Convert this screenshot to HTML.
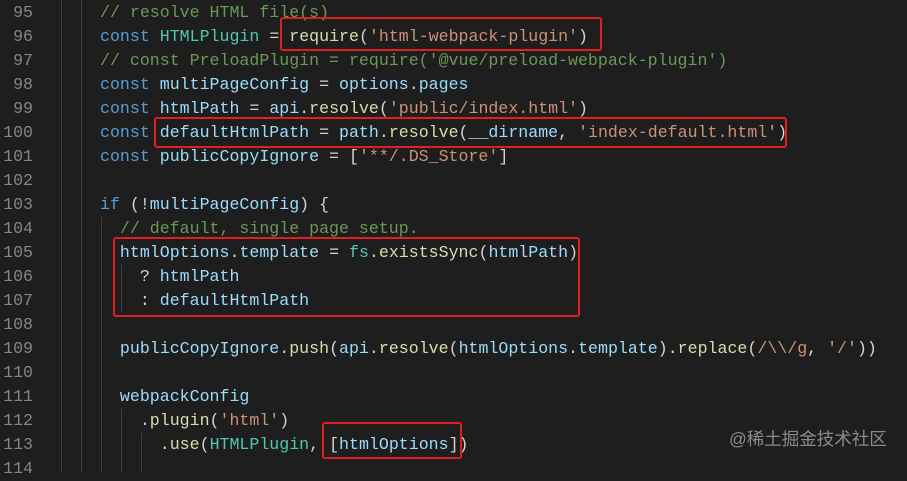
<!DOCTYPE html>
<html><head><meta charset="utf-8"><style>
body{margin:0;width:907px;height:473px;background:#1e1e1e;overflow:hidden;position:relative;font-family:"Liberation Mono",monospace;font-size:16.6px;color:#d4d4d4}
.l{position:absolute;left:0;height:24px;line-height:24px;white-space:pre;width:907px}
.n{position:absolute;right:874px;color:#858585;text-align:right}
.c{position:absolute;left:100px}
.k{color:#569cd6}.v{color:#9cdcfe}.t{color:#4ec9b0}.f{color:#dcdcaa}.s{color:#ce9178}.m{color:#6a9955}
.g{position:absolute;width:1px;background:#404040}
.b{position:absolute;border:2px solid #e02020;border-radius:3px;box-sizing:border-box}
.w{position:absolute;left:729px;top:426px;font-family:"Liberation Sans","Noto Sans CJK SC",sans-serif;font-size:17.5px;color:#8a8a8a}
</style></head><body>
<div class="g" style="left:61px;top:0;height:473px"></div>
<div class="g" style="left:81px;top:0;height:473px"></div>
<div class="g" style="left:101px;top:217px;height:256px"></div>
<div class="g" style="left:121px;top:265px;height:48px"></div>
<div class="g" style="left:121px;top:409px;height:64px"></div>
<div class="g" style="left:141px;top:433px;height:40px"></div>

<div class="l" style="top:1px"><span class="n">95</span><span class="c m">// resolve HTML file(s)</span></div>
<div class="l" style="top:25px"><span class="n">96</span><span class="c"><span class="k">const</span> <span class="t">HTMLPlugin</span> = <span class="f">require</span>(<span class="s">'html-webpack-plugin'</span>)</span></div>
<div class="l" style="top:49px"><span class="n">97</span><span class="c m">// const PreloadPlugin = require('@vue/preload-webpack-plugin')</span></div>
<div class="l" style="top:73px"><span class="n">98</span><span class="c"><span class="k">const</span> <span class="v">multiPageConfig</span> = <span class="v">options</span>.<span class="v">pages</span></span></div>
<div class="l" style="top:97px"><span class="n">99</span><span class="c"><span class="k">const</span> <span class="v">htmlPath</span> = <span class="v">api</span>.<span class="f">resolve</span>(<span class="s">'public/index.html'</span>)</span></div>
<div class="l" style="top:121px"><span class="n">100</span><span class="c"><span class="k">const</span> <span class="v">defaultHtmlPath</span> = <span class="v">path</span>.<span class="f">resolve</span>(<span class="v">__dirname</span>, <span class="s">'index-default.html'</span>)</span></div>
<div class="l" style="top:145px"><span class="n">101</span><span class="c"><span class="k">const</span> <span class="v">publicCopyIgnore</span> = [<span class="s">'**/.DS_Store'</span>]</span></div>
<div class="l" style="top:169px"><span class="n">102</span></div>
<div class="l" style="top:193px"><span class="n">103</span><span class="c"><span class="k">if</span> (!<span class="v">multiPageConfig</span>) {</span></div>
<div class="l" style="top:217px"><span class="n">104</span><span class="c m">  // default, single page setup.</span></div>
<div class="l" style="top:241px"><span class="n">105</span><span class="c">  <span class="v">htmlOptions</span>.<span class="v">template</span> = <span class="t">fs</span>.<span class="f">existsSync</span>(<span class="v">htmlPath</span>)</span></div>
<div class="l" style="top:265px"><span class="n">106</span><span class="c">    ? <span class="v">htmlPath</span></span></div>
<div class="l" style="top:289px"><span class="n">107</span><span class="c">    : <span class="v">defaultHtmlPath</span></span></div>
<div class="l" style="top:313px"><span class="n">108</span></div>
<div class="l" style="top:337px"><span class="n">109</span><span class="c">  <span class="v">publicCopyIgnore</span>.<span class="f">push</span>(<span class="v">api</span>.<span class="f">resolve</span>(<span class="v">htmlOptions</span>.<span class="v">template</span>).<span class="f">replace</span>(<span class="s">/\\/g</span>, <span class="s">'/'</span>))</span></div>
<div class="l" style="top:361px"><span class="n">110</span></div>
<div class="l" style="top:385px"><span class="n">111</span><span class="c">  <span class="v">webpackConfig</span></span></div>
<div class="l" style="top:409px"><span class="n">112</span><span class="c">    .<span class="f">plugin</span>(<span class="s">'html'</span>)</span></div>
<div class="l" style="top:433px"><span class="n">113</span><span class="c">      .<span class="f">use</span>(<span class="t">HTMLPlugin</span>, [<span class="v">htmlOptions</span>])</span></div>
<div class="l" style="top:457px"><span class="n">114</span></div>

<div class="b" style="left:280px;top:17px;width:322px;height:34px"></div>
<div class="b" style="left:154px;top:117px;width:633px;height:31px"></div>
<div class="b" style="left:113px;top:237px;width:467px;height:80px"></div>
<div class="b" style="left:322px;top:422px;width:140px;height:37px"></div>
<div class="w">@稀土掘金技术社区</div>
</body></html>
